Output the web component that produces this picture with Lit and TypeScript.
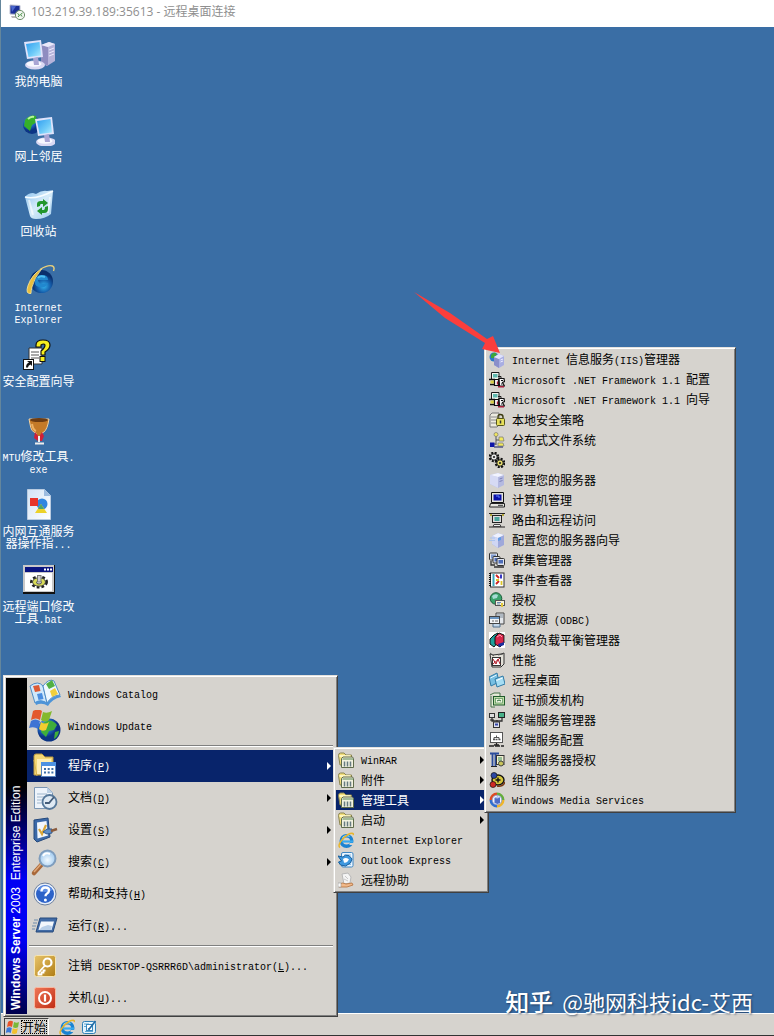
import { LitElement, html, svg, css, nothing, TemplateResult } from "lit";

type Item = { icon: string; label: string; sub?: Item[]; open?: boolean };

const gear = (x: number, y: number, r: number, fill: string) => svg`
  <circle cx=${x} cy=${y} r=${r + 0.6} fill="none" stroke="#111" stroke-width="3" stroke-dasharray="1.8 1.2"/>
  <circle cx=${x} cy=${y} r=${r} fill=${fill} stroke="#222" stroke-width="1"/>
  <circle cx=${x} cy=${y} r=${r * 0.35} fill="#222"/>`;

/* 16px glyphs */
const small: Record<string, TemplateResult> = {
  folder: svg`
    <path d="M.5 3.500q0-2.500 2-2.500h3.500l2 2h5.500v10H2z" fill="#f3df7c" stroke="#8a8450"/>
    <path d="M1.500 4h11" stroke="#fffbd0" stroke-width="1.600"/>
    <path d="M3.500 15.500v-9l1.500-1.500h9.500l1 1.500v9z" fill="#f2f2e0" stroke="#5f6b4c"/>
    <path d="M4.500 7h10.500" stroke="#8fae86" stroke-width="1.600"/>
    <path d="M6.500 9.500v5M9.500 9.500v5M12.500 9.500v5" stroke="#667a80" stroke-width="1.500"/>`,
  ie: svg`
    <circle cx="8.500" cy="9" r="5.300" fill="none" stroke="#1b83d2" stroke-width="3.400"/>
    <path d="M4 9.500h11" stroke="#38a9ee" stroke-width="2.200"/>
    <path d="M11.500 11h5v2h-5z" fill="#d6d3ce"/>
    <path d="M4.500 6a4.800 4.300 0 0 1 7-1.500" stroke="#8ed9ff" fill="none" stroke-width="1.200"/>
    <path d="M2 15.500c-3-2 2-9.500 8-13 3-1.600 6-2 5.300.6" fill="none" stroke="#e8b52c" stroke-width="1.500"/>`,
  outlook: svg`
    <rect x="3.500" y=".5" width="11.500" height="14.500" rx="1.500" fill="#eaf5ff" stroke="#3e87c4"/>
    <path d="M6 3h7M9 12.500h4" stroke="#8cbde4"/>
    <path d="M0 4l5 1q2-3 6-1.500l3 3.500-1.500 4-5 3-5-1-2-3 3-1z" fill="#3f98df" stroke="#17609f"/>
    <path d="M5 7q3-2 6 .5-2 4-5 3z" fill="#fff"/>`,
  assist: svg`
    <path d="M4 2l6-1 3 4-1 6-6 1z" fill="#f4f4f4" stroke="#b8b8b8"/>
    <path d="M7 4l3 3M6 7l4 2" stroke="#c8c8c8"/>
    <path d="M1 12q4-2 7 0l6-1 1 2-6 2H1z" fill="#f1b98a" stroke="#b4713e" stroke-width=".8"/>
    <rect x="0" y="11" width="3" height="4" fill="#f8f8f8" stroke="#999" stroke-width=".6"/>`,
  iis: svg`
    <circle cx="5" cy="5" r="4.500" fill="#2b78c8"/>
    <path d="M2 3q2-3 5-2l1 3-3 2-3 0z" fill="#3da63a"/>
    <path d="M5 5l5-3 5 2v9l-5 3-5-3z" fill="#a9aee2"/>
    <path d="M5 5l5 2v9l-5-3z" fill="#8a8fca"/>
    <path d="M5 5l5-3 5 2-5 3z" fill="#dfe2fb"/>
    <path d="M11.500 8l2.500-1M11.500 10l2.500-1" stroke="#eef"/>`,
  dotnet: svg`
    <path d="M2.500.5h7.500v7h-7.500z" fill="#eef4ee" stroke="#1a1a1a"/>
    <path d="M4 2h4.500v3.500h-4.500z" fill="#5fb8ae"/>
    <path d="M0 7.500h6M1 12.500h6" stroke="#111" stroke-width="1.600"/>
    <path d="M1.500 8.500h4v3h-4z" fill="#d9cf48"/>
    <path d="M5.500 7.500h4v6h-4z" fill="#fff" stroke="#111" stroke-width="1.200"/>
    <path d="M10 6.500h5l.5 3-2 1 2 3.500h-5z" fill="#f6f6f6" stroke="#111" stroke-width="1.200"/>
    <path d="M12 8.500h2M12 12h1.500" stroke="#111"/>
    <path d="M9 4.500h3v2" stroke="#1a1a1a" fill="none"/>
    <path d="M9 14.800h6M8.500 9.500v3" stroke="#a51e3a" stroke-width="1.400"/>`,
  policy: svg`
    <path d="M1 3l2-2h7v12l-2 2H1z" fill="#ecebe0" stroke="#777"/>
    <path d="M2 5h6M2 8h5M2 11h5" stroke="#888"/>
    <path d="M9 7V5q0-2.500 2.500-2.500T14 5v2" fill="none" stroke="#3c3c10" stroke-width="1.400"/>
    <rect x="7.500" y="6.500" width="8" height="7" rx="1" fill="#e6df59" stroke="#55551a"/>
    <path d="M11.500 8.500v3" stroke="#333" stroke-width="1.500"/>`,
  dfs: svg`
    <path d="M7 4v9M7 8h5M3 12h4" stroke="#555"/>
    <circle cx="7" cy="2.500" r="2" fill="#f1e65e" stroke="#777" stroke-width=".7"/>
    <path d="M10 5h4l1 4h-5zM9 11h5l1 3H9z" fill="#f2e95c" stroke="#777" stroke-width=".7"/>
    <rect x="1" y="10.500" width="4.500" height="4.500" fill="#0b13a8"/>
    <path d="M5 15h9" stroke="#4a5080" stroke-width="1.400"/>`,
  services: svg`${gear(5, 5, 3.2, "#e8e8e8")}${gear(11, 11, 3.2, "#e5dc6c")}`,
  server: svg`
    <path d="M1 3l8-2 6 2v10l-6 3-8-4z" fill="#b4b9e0"/>
    <path d="M1 3l8 2v11l-8-4z" fill="#d6daf4"/>
    <path d="M1 3l8-2 6 2-6 2z" fill="#f2f4ff"/>
    <path d="M10.500 7l3-1M10.500 9.500l3-1" stroke="#7c82b8"/>`,
  computer: svg`
    <path d="M2.500.5h12v10h-12z" fill="#e4e4de" stroke="#111"/>
    <rect x="4.500" y="2.500" width="8" height="6" fill="#0a10a8"/>
    <path d="M7 4h3v2" stroke="#5c80ff" fill="none"/>
    <path d="M1.500 11.500h14v3.500H.5z" fill="#e6e6e0" stroke="#222"/>
    <path d="M9 13.300h5" stroke="#333"/>`,
  route: svg`
    <path d="M0 1.500h16M0 15h16" stroke="#222" stroke-width="1.200"/>
    <path d="M2 2v2M14 2v2" stroke="#b5a83a" stroke-width="2"/>
    <rect x="3.500" y="3.500" width="9" height="7" fill="#ddd" stroke="#222"/>
    <rect x="5.500" y="5" width="5" height="4" fill="#49a49c"/>
    <path d="M5 12.500h6l1 2H4z" fill="#eee" stroke="#444"/>`,
  wizard: svg`
    <path d="M3 4l6-3 6 2v10l-6 3-6-4z" fill="#9fa8da"/>
    <path d="M3 4l6 2v10l-6-4z" fill="#cfd6f4"/>
    <path d="M3 4l6-3 6 2-6 3z" fill="#eff2ff"/>
    <path d="M9 6l3-1v3l-3 1z" fill="#5f9ae4"/>
    <path d="M1 6h5M0 8.500h6" stroke="#a9c3ee"/>`,
  cluster: svg`
    <rect x=".5" y="1" width="8" height="7" rx="1" fill="#e2e5ee" stroke="#333"/>
    <rect x="2" y="2.500" width="5" height="4" fill="#7e9ad0"/>
    <rect x="4" y="4.500" width="7" height="6.500" rx="1" fill="#e2e5ee" stroke="#333"/>
    <rect x="5.500" y="6" width="4" height="3.500" fill="#4d6cb8"/>
    <rect x="8" y="6.500" width="7.500" height="7" rx="1" fill="#e2e5ee" stroke="#333"/>
    <rect x="9.500" y="8" width="4.500" height="3.500" fill="#4d6cb8"/>
    <path d="M2 9v4h4M5 15h10" stroke="#333" fill="none" stroke-width="1.300"/>`,
  event: svg`
    <rect x="1.500" y="1" width="13.500" height="14" fill="#fff" stroke="#333"/>
    <path d="M1 1v14" stroke="#111" stroke-width="2" stroke-dasharray="1 1"/>
    <path d="M4.500 2v12" stroke="#39a6bd" stroke-width="2"/>
    <path d="M7 3l3 3M7 12l3-3" stroke="#c22" stroke-width="1.800"/>
    <path d="M12 2.500v4" stroke="#22b" stroke-width="1.800"/>
    <path d="M12.500 9v4M7 8h3" stroke="#dcc62a" stroke-width="1.800"/>`,
  license: svg`
    <circle cx="7" cy="6.500" r="5.800" fill="#3aa36c" stroke="#185c38"/>
    <path d="M3 4q3-3 6-1l-1 3-4 1z" fill="#a5dcd4"/>
    <rect x="6.500" y="8.500" width="9" height="5" fill="#f5f3dc" stroke="#555"/>
    <path d="M8 10.500h4M8 12h3" stroke="#4a71b0" stroke-width=".8"/>
    <path d="M13 11v4" stroke="#e2c63a" stroke-width="2"/>`,
  odbc: svg`
    <path d="M7 1h8v11H7z" fill="#e3e6ea" stroke="#444"/>
    <path d="M8 3h6M8 5h6" stroke="#7d8a98"/>
    <rect x=".5" y="4.500" width="10" height="7" fill="#f2f4f6" stroke="#444"/>
    <path d="M1 6h9" stroke="#4a7fb4" stroke-width="1.600"/>
    <path d="M3 9h2M6 9h3" stroke="#666"/>
    <path d="M4 12v3h7v-3" fill="#c3d7ea" stroke="#4f6e8c"/>`,
  balance: svg`
    <rect width="16" height="16" fill="#fff"/>
    <path d="M1 7l4-4 4-2v9l-4 5-4-3z" fill="#1fa09b" stroke="#111"/>
    <path d="M6 5l4-4 5 2v8l-4 4-5-3z" fill="#d8264a" stroke="#111"/>
    <path d="M8 5l3-2 2 2" stroke="#ff9db0" fill="none"/>
    <path d="M9 12l6-2v3l-5 2z" fill="#1b2e9c"/>`,
  perf: svg`
    <path d="M1 2l3 1 8-1 3-1v11l-3 3H3z" fill="#e4e2da" stroke="#333"/>
    <rect x="3.500" y="5.500" width="8" height="8" fill="#fff" stroke="#333"/>
    <path d="M4 7l3 5 2-5 2 5M4 12l7-6" stroke="#b41e2c" fill="none"/>
    <path d="M1 1l4 3M9 3l5-1" stroke="#555"/>`,
  remote: svg`
    <path d="M0 5l8-4 2 9-8 4z" fill="#77bfe2" stroke="#2f7aa6"/>
    <path d="M6 7l8-3 2 8-8 3z" fill="#a6ddf3" stroke="#2f7aa6"/>
    <path d="M1.500 6l6-3" stroke="#e4f6ff"/><path d="M7.500 8.500l6-2.500" stroke="#fff"/>`,
  cert: svg`
    <path d="M1 3l4-2h6v3M2 4v11h4" fill="#e6ecd8" stroke="#47704a"/>
    <rect x="4.500" y="4.500" width="11" height="8.500" fill="#bfdca8" stroke="#1f5a2b"/>
    <rect x="6.500" y="6.500" width="7" height="4.500" fill="#eef6e0" stroke="#4f8f54" stroke-width=".7"/>
    <path d="M8 9l2-1 2 1" stroke="#2c6b3a" fill="none"/>`,
  tsmgr: svg`
    <rect x=".5" y="1.500" width="5" height="4" fill="#ddd" stroke="#333"/>
    <rect x="9.500" y=".5" width="6" height="5" fill="#48b088" stroke="#222"/>
    <path d="M3 6v3h10V6M8 8v3" stroke="#333" fill="none" stroke-width="1.300"/>
    <path d="M1 8h4" stroke="#222"/>
    <rect x="4.500" y="10" width="6" height="5.500" fill="#dcdff0" stroke="#333"/>
    <rect x="6" y="11.500" width="3" height="2" fill="#3547a8"/>`,
  tscfg: svg`
    <rect x="1.500" y=".5" width="12" height="10" fill="#fff" stroke="#555"/>
    <path d="M5 7.500v-2h5v2M7.500 5.500V3.500" stroke="#555" fill="none"/>
    <path d="M4 7.500h2M6.500 7.500h2M9.500 7.500h2" stroke="#555" stroke-width="1.500"/>
    <path d="M7.500 11v2M0 14h15" stroke="#222" stroke-width="1.300" stroke-dasharray="5 1"/>
    <path d="M5 13h5" stroke="#222" stroke-width="1.500"/>`,
  tslic: svg`
    <path d="M1 1.500h9M3.500 2v12M6.500 2v12" stroke="#2b4c9c" stroke-width="1.800"/>
    <path d="M2 14.500h6" stroke="#222"/>
    <rect x="7.500" y="3.500" width="7.500" height="9" fill="#f0eed0" stroke="#333"/>
    <path d="M9 6h4M9 8h4" stroke="#3a8f5c"/>
    <circle cx="12" cy="11.500" r="2.500" fill="#c9c45a" stroke="#444"/>`,
  com: svg`
    <ellipse cx="9" cy="8" rx="6" ry="5" fill="#d6c63c" stroke="#111" stroke-width="1.400"/>
    <circle cx="5" cy="3.500" r="3" fill="#2a45a4" stroke="#111" stroke-width=".7"/>
    <circle cx="4" cy="12.500" r="3" fill="#cf2a24" stroke="#111" stroke-width=".7"/>
    <path d="M9 5.500v5M6.500 8h5" stroke="#111" stroke-width="1.400"/>
    <path d="M8 14q6 1 8-4" stroke="#7a3a14" fill="none" stroke-width="1.500"/>`,
  media: svg`
    <path d="M8 .5a7.500 7.500 0 0 0-7.500 7.500h3a4.500 4.500 0 0 1 4.500-4.500z" fill="#dd4a22"/>
    <path d="M8 .5a7.500 7.500 0 0 1 7.500 7.500h-3a4.500 4.500 0 0 0-4.500-4.500z" fill="#64ae3a"/>
    <path d="M15.500 8a7.500 7.500 0 0 1-7.500 7.500v-3a4.500 4.500 0 0 0 4.500-4.500z" fill="#eeb52a"/>
    <path d="M.5 8a7.500 7.500 0 0 0 7.500 7.500v-3a4.500 4.500 0 0 1-4.500-4.500z" fill="#2f6fd0"/>
    <circle cx="8" cy="8" r="4.800" fill="#f2f4fd" stroke="#8591c4" stroke-width=".8"/>
    <path d="M5.500 6l3-1.500 2.500 1v5.500l-2.500 1-3-1z" fill="#4d6cc6"/>
    <path d="M5.500 6l3-1.500 2.500 1-2.500 1z" fill="#b4c4f2"/>`,
  flag: svg`
    <path d="M3 3q2.500-2 5-.5L7 8Q4.500 6.500 2 8z" fill="#e8542a"/>
    <path d="M9 3q2.500 1.500 5 0l-1 5.200q-2.500 1.500-5 0z" fill="#7ab83a"/>
    <path d="M1.800 9q2.500-1.500 5 0l-1 5q-2.500-1.500-5 0z" fill="#3d78d8"/>
    <path d="M7.800 9.300q2.500 1.500 5 0l-1 5q-2.500 1.500-5 0z" fill="#f2c02e"/>`,
  desk: svg`
    <rect x="1.500" y="2.500" width="13" height="12" rx="2" fill="#e4f3fc" stroke="#2d7fb6"/>
    <path d="M3 5h5M3 7.500h4M4 12.500h8" stroke="#5fa6d2"/>
    <rect x="5.500" y="5.500" width="6" height="6" fill="#fff" stroke="#3a8ac0"/>
    <path d="M7 9.500l1 .8L14.500 2" fill="none" stroke="#1f6aa4" stroke-width="1.600"/>`,
  rdp: svg`
    <path d="M1 1l10 .5v9L1 10z" fill="#1a2f96" stroke="#b8bcd0"/>
    <path d="M2 2l5 .2L3 8z" fill="#4c68d0"/>
    <path d="M2 12h6v2H3z" fill="#b9b9b9"/>
    <circle cx="11" cy="11" r="4.600" fill="#f1f5ef" stroke="#6f8f6c"/>
    <path d="M8.500 9.500l2 1.500-1.500 2M13.500 9l-2 1.500 1.500 2" fill="none" stroke="#3b8a3a"/>`,
};

/* 32px glyphs */
const monitor = svg`
  <path d="M1 3l17-2 2 17-16 2z" fill="#dfe3fb"/>
  <path d="M3 5l13.500-2 1.500 13.500L5.500 18z" fill="url(#g-screen)"/>
  <ellipse cx="12" cy="26" rx="10" ry="4.500" fill="#d9d8f2"/>
  <ellipse cx="11" cy="25" rx="7.500" ry="2.800" fill="#f8f8ff"/>
  <path d="M10 19l5-1 1 8h-5z" fill="#a9a5d4"/>`;

const big: Record<string, TemplateResult> = {
  mycomputer: svg`
    <path d="M18 6l8-3 6 2v17l-8 5-6-3z" fill="#b6b3da"/>
    <path d="M18 6l7 2v19l-7-3z" fill="#8f8cc0"/>
    <path d="M18 6l8-3 6 2-7 3z" fill="#e9e8fa"/>
    <path d="M26 11l5-2M26 14l5-2M26 17l5-2" stroke="#ecebff"/>
    <g>${monitor}</g>`,
  network: svg`
    <circle cx="9" cy="11" r="9" fill="url(#g-globe)"/>
    <path d="M2 6q5-6 11-4l1 6-5 3-2 6-6-5z" fill="#35b02b"/>
    <path d="M5 5q3-3 6-2" stroke="#b8f59a" stroke-width="2" fill="none"/>
    <g transform="translate(11 2)">${monitor}</g>`,
  recycle: svg`
    <path d="M2 8q3-4 8-4l3 1q6-4 11-3 5-1 6 0l-2 23q-6 5-15 5-5 0-6-3z" fill="url(#g-bin)"/>
    <path d="M2 8q11 3 28-6" stroke="#f7fdff" stroke-width="1.500" fill="none"/>
    <path d="M6 11l4 15M27 8l-2 16" stroke="#fff" stroke-opacity=".6" stroke-width="2"/>
    <path d="M14 18v-3q0-3 4-3h2v-2l5 4-5 4v-3h-2q-1 0-1 2z" fill="#22962c"/>
    <path d="M25 17v3q0 4-4 4h-2v2l-5-4 5-4v3h2q1 0 1-3z" fill="#22962c"/>`,
  ie: svg`
    <circle cx="18.500" cy="17.500" r="11.500" fill="url(#g-ie)"/>
    <path d="M12 19q0-8 7-8 6 0 6 5H15q1 6 10 3-2 5-7 4-6 0-6-4z" fill="#2188cf"/>
    <path d="M15 14q2-3 7-1" stroke="#4fc0f4" fill="none" stroke-width="2"/>
    <path d="M8 29.500q-6 1-3-8Q9 10 19 4.500 11 14 9 23q-1 4-1 6.500z" fill="#e7bd3e" stroke="#fbe99c" stroke-width=".8"/>
    <path d="M17 5.500q8-5 12.500-3.500 2.500 1 1 5" fill="none" stroke="#e9cf7a" stroke-width="1.400"/>`,
  wizard: svg`
    <path d="M6 9h13v16H6z" fill="#fff" stroke="#333"/>
    <path d="M8 13h8M8 16h8M8 19h8" stroke="#555"/>
    <path d="M13 6q0-5 7-5t7 5q0 4-5 7v3h-4v-4q4-3 4-6-1-2-4 0v2h-5z" fill="#f6ef20" stroke="#111" stroke-width="1.200"/>
    <rect x="17" y="17.500" width="5" height="5" fill="#f6ef20" stroke="#111"/>
    <rect x=".5" y="20.500" width="10" height="10" fill="#fff" stroke="#111"/>
    <path d="M3 28.500q0-4 3-5l-2-1.500h5v5l-1.500-1.500Q5 26.500 5 28.500z" fill="#111"/>`,
  trophy: svg`
    <path d="M6 5h20l-1 5q-2 8-6 9v4h-6v-4Q8 18 7 10z" fill="#c47a28" stroke="#f0d0a0"/>
    <ellipse cx="16" cy="6" rx="9" ry="2" fill="#6d3c12"/>
    <path d="M9 10q1 6 4 7" stroke="#efb263" stroke-width="2" fill="none"/>
    <path d="M12 18l-1 6 4 3h4l2-5-2-4-3 5z" fill="#d01f38"/>
    <path d="M16 22v6M12 29.500h9" stroke="#eee" stroke-width="2"/>`,
  image: svg`
    <path d="M4.500.5h17l6 6v24h-23z" fill="url(#g-doc)" stroke="#b9cbe0"/>
    <path d="M21 0v7h7z" fill="#9cbce0"/>
    <circle cx="19" cy="15" r="5.500" fill="#2f86e0"/>
    <rect x="7" y="9" width="8" height="8" fill="#e8352a"/>
    <path d="M18 15l6 9H12z" fill="#ecd229"/>
    <path d="M18 15l3 5h-6z" fill="#4da36a"/>`,
  bat: svg`
    <rect x="0" y="1" width="32" height="28" fill="#c8c8c8"/>
    <path d="M0 29h32V1" fill="none" stroke="#111" stroke-width="2"/>
    <rect x="2" y="3" width="28" height="5" fill="#0a1480"/>
    <path d="M21 5.500h8" stroke="#fff" stroke-width="2" stroke-dasharray="2 1"/>
    <rect x="2" y="9" width="27" height="18" fill="#fff"/>
    <ellipse cx="16" cy="18" rx="7" ry="4.500" fill="none" stroke="#222" stroke-width="4" stroke-dasharray="2.500 1.800"/>
    <ellipse cx="16" cy="18" rx="6.500" ry="4.200" fill="#d9dc58" stroke="#444"/>
    <ellipse cx="16" cy="18.500" rx="2.500" ry="1.500" fill="#fff" stroke="#444"/>
    <rect x="14.500" y="11.500" width="3.500" height="6.500" fill="#ccc" stroke="#777"/>`,
  catalog: svg`
    <path d="M1 8q8-6 13 0l4 17q-6-4-12 0z" fill="#cfe8fb" stroke="#4f8dc6"/>
    <path d="M14 8q6-8 11-5l6 14q-8 0-13 8z" fill="#eef8ff" stroke="#4f8dc6"/>
    <path d="M6 24q6-4 12 1 5-7 13-8l1 2q-9 2-13 9-6-4-12-1z" fill="#4d94d8"/>
    <path d="M4 8l6-1 1.500 6-5.500 1z" fill="#dd5a34"/>
    <path d="M8 16l5-1 1.500 6-5 1z" fill="#4a8ee0"/>
    <path d="M17 6l6-4 3 6-6 3z" fill="#52b043"/>
    <path d="M21 13l5-3 3 6-6 3z" fill="#f0cf3c"/>`,
  update: svg`
    <circle cx="20" cy="20" r="11.500" fill="url(#g-globe)"/>
    <path d="M14 13q8-6 14 2l-3 5-5 1-3 6-5-5z" fill="#3fae3b"/>
    <path d="M26 22l4-1q-1 6-5 8z" fill="#3fae3b"/>
    <path d="M4 1q5-3 9 0l-2 9q-4-3-9 0z" fill="#e3592c"/>
    <path d="M14 2q4 2 9-1l-3 9q-4 3-8 0z" fill="#84b92e"/>
    <path d="M2 11q4-3 9 0l-2 8q-4-3-9-1z" fill="#3f74d4"/>
    <path d="M12 12q4 3 8 0l-3 8q-4 2-7-1z" fill="#f2cd30"/>`,
  programs: svg`
    <path d="M5 6q0-2 2-2h6l3 3h8v18H5z" fill="#f4d876" stroke="#b8963c"/>
    <path d="M8 9h14v15H8z" fill="#ffeeb2"/>
    <path d="M5 10l3 16" stroke="#d8b450"/>
    <rect x="12.500" y="12.500" width="14" height="14" fill="#fff" stroke="#5a86c0"/>
    <rect x="12" y="12" width="15" height="4" fill="#4d92e2"/>
    <path d="M15 19h10M15 22.500h10" stroke="#3c6ea6" stroke-width="2" stroke-dasharray="2 1.700"/>`,
  docs: svg`
    <path d="M5.500 5.500h13l5 5v16h-18z" fill="#eef4fb" stroke="#7c97b4"/>
    <path d="M18 5v6h6z" fill="#bcd0e4"/>
    <path d="M8 12h10M8 15h8M8 18h6M8 21h6" stroke="#9fb6cc"/>
    <circle cx="20.500" cy="20" r="7" fill="#dfeaf4" stroke="#56789a" stroke-width="1.800"/>
    <path d="M25 15l-5 6h-4" fill="none" stroke="#445c78" stroke-width="1.800"/>`,
  settings: svg`
    <path d="M5 6l14-2 2 19-13 5-3-3z" fill="#3b69a8" stroke="#24497c"/>
    <path d="M8 8.500l9.500-1.500 1.500 14.500-10.500 3z" fill="#f2f7fd"/>
    <path d="M10 15l3 5 4-9" fill="none" stroke="#d8a638" stroke-width="2.200"/>
    <path d="M14 18l4-3h5v4l-5 1z" fill="#5c8cc6" stroke="#2f5a90"/>
    <path d="M22 17l6-2" stroke="#8a5a3c" stroke-width="2.500"/>`,
  search: svg`
    <path d="M14 17L5 27" stroke="#a9683a" stroke-width="4.500" stroke-linecap="round"/>
    <path d="M13 17L5 26" stroke="#e0a878" stroke-width="1.500"/>
    <circle cx="18.500" cy="12.500" r="8" fill="url(#g-lens)" stroke="#7f9dbd" stroke-width="2"/>
    <path d="M14 10q2-4 7-2" fill="none" stroke="#fff" stroke-width="2"/>`,
  help: svg`
    <circle cx="16" cy="16" r="11" fill="#e8effa" stroke="#6c7f9c"/>
    <circle cx="16" cy="16" r="9" fill="#2c62c8"/>
    <path d="M8.500 12a8 7 0 0 1 15 0q-7 4-15 0z" fill="#5d8ee6"/>
    <path d="M12.500 13.500q0-4 3.800-4t3.700 3q0 2-2.200 3.200-1.300.8-1.300 2.600" fill="none" stroke="#fff" stroke-width="2.400"/>
    <circle cx="16.400" cy="22" r="1.500" fill="#fff"/>`,
  run: svg`
    <path d="M11 8h17l-4 14H7z" fill="#416ba6" stroke="#274a7c"/>
    <path d="M12 11.500h13l-2.500 8.500H9.500z" fill="#f3f7fc"/>
    <path d="M13 17l6-2 4 1-1 4H10z" fill="#b9cfe8"/>
    <path d="M5 10h4M4 13h4M3 16h4M3 19h3" stroke="#6f8dad"/>`,
  logoff: svg`
    <rect x="5.500" y="5.500" width="21" height="21" rx="2" fill="url(#g-gold)" stroke="#f6e4b0"/>
    <circle cx="18.500" cy="12.500" r="4" fill="none" stroke="#fff" stroke-width="2.200"/>
    <path d="M16 15.500l-6.500 7v2h3v-2h2v-2h2" fill="none" stroke="#fff" stroke-width="1.800"/>`,
  shutdown: svg`
    <rect x="5.500" y="5.500" width="21" height="21" rx="2" fill="url(#g-red)" stroke="#f8b8a0"/>
    <circle cx="16" cy="16" r="6" fill="none" stroke="#fff" stroke-width="2"/>
    <path d="M16 12.500v7" stroke="#fff" stroke-width="2.200"/>`,
};

const desktopItems = [
  { icon: "mycomputer", lines: ["我的电脑"] },
  { icon: "network", lines: ["网上邻居"] },
  { icon: "recycle", lines: ["回收站"] },
  { icon: "ie", lines: ["Internet", "Explorer"] },
  { icon: "wizard", lines: ["安全配置向导"] },
  { icon: "trophy", lines: ["MTU修改工具.", "exe"] },
  { icon: "image", lines: ["内网互通服务", "器操作指..."] },
  { icon: "bat", lines: ["远程端口修改", "工具.bat"] },
];

const adminTools: Item[] = [
  { icon: "iis", label: "Internet 信息服务(IIS)管理器" },
  { icon: "dotnet", label: "Microsoft .NET Framework 1.1 配置" },
  { icon: "dotnet", label: "Microsoft .NET Framework 1.1 向导" },
  { icon: "policy", label: "本地安全策略" },
  { icon: "dfs", label: "分布式文件系统" },
  { icon: "services", label: "服务" },
  { icon: "server", label: "管理您的服务器" },
  { icon: "computer", label: "计算机管理" },
  { icon: "route", label: "路由和远程访问" },
  { icon: "wizard", label: "配置您的服务器向导" },
  { icon: "cluster", label: "群集管理器" },
  { icon: "event", label: "事件查看器" },
  { icon: "license", label: "授权" },
  { icon: "odbc", label: "数据源 (ODBC)" },
  { icon: "balance", label: "网络负载平衡管理器" },
  { icon: "perf", label: "性能" },
  { icon: "remote", label: "远程桌面" },
  { icon: "cert", label: "证书颁发机构" },
  { icon: "tsmgr", label: "终端服务管理器" },
  { icon: "tscfg", label: "终端服务配置" },
  { icon: "tslic", label: "终端服务器授权" },
  { icon: "com", label: "组件服务" },
  { icon: "media", label: "Windows Media Services" },
];

const programs: Item[] = [
  { icon: "folder", label: "WinRAR", sub: [] },
  { icon: "folder", label: "附件", sub: [] },
  { icon: "folder", label: "管理工具", sub: adminTools, open: true },
  { icon: "folder", label: "启动", sub: [] },
  { icon: "ie", label: "Internet Explorer" },
  { icon: "outlook", label: "Outlook Express" },
  { icon: "assist", label: "远程协助" },
];

const startItems: (Item | null)[] = [
  { icon: "catalog", label: "Windows Catalog" },
  { icon: "update", label: "Windows Update" },
  null,
  { icon: "programs", label: "程序(&P)", sub: programs, open: true },
  { icon: "docs", label: "文档(&D)", sub: [] },
  { icon: "settings", label: "设置(&S)", sub: [] },
  { icon: "search", label: "搜索(&C)", sub: [] },
  { icon: "help", label: "帮助和支持(&H)" },
  { icon: "run", label: "运行(&R)..." },
  null,
  { icon: "logoff", label: "注销 DESKTOP-QSRRR6D\\administrator(&L)..." },
  { icon: "shutdown", label: "关机(&U)..." },
];

class AppRoot extends LitElement {
  static styles = css`
    :host {
      --face: #d6d3ce;
      --select: #08246b;
      position: relative;
      display: flex;
      flex-direction: column;
      box-sizing: border-box;
      min-height: 100vh;
      overflow: hidden;
      border-left: 1px solid #64869c;
      border-bottom: 1px solid #333;
      background: #3a6ea5;
      font: 12px/12px "Noto Sans CJK SC", sans-serif;
      color: #000;
    }
    button {
      font: inherit;
      color: inherit;
      background: none;
      border: 0;
      margin: 0;
      padding: 0;
      text-align: left;
    }
    svg { display: block; flex: none; }
    ul { list-style: none; margin: 0; padding: 0; }
    .defs { position: absolute; }
    .latin { font: 10px/12px "Liberation Mono", monospace; }

    .title {
      display: flex;
      align-items: center;
      gap: 6px;
      height: 27px;
      padding: 0 8px 3px;
      box-sizing: border-box;
      background: #fff;
      color: #8f8f8f;
      font: 12px/16px "Open Sans", "Noto Sans CJK SC", sans-serif;
      white-space: pre;
    }

    .desktop {
      flex: 1;
      display: flex;
      flex-direction: column;
      align-items: flex-start;
      padding-top: 12px;
    }
    .shortcut {
      display: flex;
      flex-direction: column;
      align-items: center;
      gap: 4px;
      width: 75px;
      height: 75px;
      color: #fff;
      text-align: center;
      white-space: nowrap;
    }
    .shortcut .line { display: block; height: 12px; }

    .taskbar {
      display: flex;
      align-items: center;
      gap: 10px;
      height: 22px;
      box-sizing: border-box;
      padding: 4px 3px 0;
      border-top: 1px solid #fff;
      background: var(--face);
    }
    .start {
      display: flex;
      align-items: center;
      height: 18px;
      padding: 0 1px 0 0;
      border: 1px solid;
      border-color: #404040 #fff #fff #404040;
    }
    .start span {
      padding: 1px;
      outline: 1px dotted #000;
      outline-offset: -1px;
    }
    .quick { display: flex; gap: 6px; }

    .menu {
      position: absolute;
      box-sizing: border-box;
      padding: 2px;
      background: var(--face);
      border: 1px solid;
      border-color: #e4e2de #404040 #404040 #e4e2de;
      box-shadow: inset 1px 1px #fff, inset -1px -1px #808080;
      color: #000;
    }
    .menu li { position: relative; }
    .row {
      display: flex;
      align-items: center;
      width: 100%;
      white-space: pre;
    }
    .row .text { flex: 1; }
    .caret {
      border: 4px solid transparent;
      border-left-color: currentColor;
      border-right-width: 0;
    }
    .open > .row { background: var(--select); color: #fff; }

    .start-menu { display: flex; left: 2px; bottom: 18px; width: 335px; }
    .start-menu > ul { flex: 1; }
    .start-menu > ul > li > .row { height: 32px; gap: 7px; padding: 0 4px 0 2px; }
    .rule { height: 3px; padding: 3px 2px 2px; }
    .rule::before {
      content: "";
      display: block;
      border-top: 1px solid #808080;
      border-bottom: 1px solid #fff;
    }

    .band {
      display: flex;
      align-items: center;
      width: 21px;
      box-sizing: border-box;
      padding-top: 4px;
      writing-mode: vertical-rl;
      transform: rotate(180deg);
      background: linear-gradient(to top, #000 32%, #0000f4 60%, #0000f4 78%, #00004c);
      color: #fff;
      font: 12px/21px "Liberation Sans", sans-serif;
      white-space: pre;
    }

    .sub .row { height: 20px; gap: 7px; padding: 0 2px; }
    .sub { left: 100%; margin-left: -2px; }
    .programs { top: -3px; width: 156px; }
    .admin { bottom: -3px; width: 252px; }

    .pointer { position: absolute; left: 412px; top: 291px; }

    .watermark {
      position: absolute;
      right: 21px;
      bottom: 18px;
      display: flex;
      align-items: center;
      gap: 9px;
      color: #fff;
      font: 22px/32px "Noto Sans CJK SC", sans-serif;
      text-shadow: 1px 1px 2px rgba(20, 40, 70, 0.7);
    }
    .watermark strong { font-size: 24px; font-weight: 500; }
  `;

  private text(label: string) {
    return label
      .split(/([\x20-\x7e]+)/)
      .filter((part) => part)
      .map((part) => {
        if (!/^[\x20-\x7e]/.test(part)) return part;
        const at = part.indexOf("&");
        return at < 0
          ? html`<span class="latin">${part}</span>`
          : html`<span class="latin">${part.slice(0, at)}<u>${part[at + 1]}</u>${part.slice(at + 2)}</span>`;
      });
  }

  private glyph16(name: string) {
    return html`<svg width="16" height="16" viewBox="0 0 16 16" aria-hidden="true">${small[name]}</svg>`;
  }

  private glyph32(name: string) {
    return html`<svg width="32" height="32" viewBox="0 0 32 32" aria-hidden="true">${big[name]}</svg>`;
  }

  private entry(item: Item, level: number): TemplateResult {
    return html`<li class=${item.open ? "open" : ""}>
      <button class="row" type="button">${level === 0 ? this.glyph32(item.icon) : this.glyph16(item.icon)}<span class="text">${this.text(item.label)}</span>${item.sub ? html`<span class="caret"></span>` : nothing}</button>
      ${item.open && item.sub
        ? html`<ul class="menu sub ${level === 0 ? "programs" : "admin"}">
            ${item.sub.map((child) => this.entry(child, level + 1))}
          </ul>`
        : nothing}
    </li>`;
  }

  render() {
    return html`
      <svg class="defs" width="0" height="0" aria-hidden="true">
        <defs>
          <linearGradient id="g-screen" x1="0" y1="0" x2="1" y2="1"><stop offset="0" stop-color="#2f9df0"/><stop offset=".6" stop-color="#6fcbf8"/><stop offset="1" stop-color="#b4ecff"/></linearGradient>
          <radialGradient id="g-globe" cx=".35" cy=".3"><stop offset="0" stop-color="#6fc2f4"/><stop offset=".6" stop-color="#1f66c4"/><stop offset="1" stop-color="#0c3484"/></radialGradient>
          <linearGradient id="g-bin" x1="0" y1="0" x2="1" y2="1"><stop offset="0" stop-color="#8fc3ee"/><stop offset=".5" stop-color="#d5ecfa"/><stop offset="1" stop-color="#a3cdec"/></linearGradient>
          <radialGradient id="g-ie" cx=".6" cy=".7"><stop offset="0" stop-color="#35b2ee"/><stop offset=".6" stop-color="#145ba8"/><stop offset="1" stop-color="#0a2f6c"/></radialGradient>
          <linearGradient id="g-doc" x1="0" y1="0" x2="1" y2="1"><stop offset="0" stop-color="#d3e4f6"/><stop offset="1" stop-color="#fff"/></linearGradient>
          <radialGradient id="g-lens" cx=".5" cy=".6"><stop offset="0" stop-color="#f2faff"/><stop offset="1" stop-color="#a6cdf0"/></radialGradient>
          <linearGradient id="g-gold" x1="0" y1="0" x2="1" y2="1"><stop offset="0" stop-color="#e8c46a"/><stop offset="1" stop-color="#b07d14"/></linearGradient>
          <linearGradient id="g-red" x1="0" y1="0" x2="1" y2="1"><stop offset="0" stop-color="#f07858"/><stop offset="1" stop-color="#c02c14"/></linearGradient>
        </defs>
      </svg>

      <header class="title">${this.glyph16("rdp")}<span>103.219.39.189:35613 - 远程桌面连接</span></header>

      <main class="desktop">
        ${desktopItems.map(
          (item) => html`<button class="shortcut" type="button">
            ${this.glyph32(item.icon)}
            <span>${item.lines.map((line) => html`<span class="line">${this.text(line)}</span>`)}</span>
          </button>`
        )}
      </main>

      <footer class="taskbar">
        <button class="start" type="button">${this.glyph16("flag")}<span>开始</span></button>
        <div class="quick">${this.glyph16("ie")}${this.glyph16("desk")}</div>
      </footer>

      <nav class="menu start-menu">
        <div class="band"><strong>Windows Server</strong> 2003  Enterprise Edition</div>
        <ul>
          ${startItems.map((item) => (item ? this.entry(item, 0) : html`<li class="rule" role="separator"></li>`))}
        </ul>
      </nav>

      <svg class="pointer" width="88" height="64" viewBox="0 0 88 64" aria-hidden="true">
        <path d="M1 1l36 21 37 26 6-3 7 17-18-4 3-6L32 27z" fill="#fb3e3c"/>
      </svg>

      <div class="watermark"><strong>知乎</strong><span>@驰网科技idc-艾西</span></div>
    `;
  }
}

customElements.define("app-root", AppRoot);
